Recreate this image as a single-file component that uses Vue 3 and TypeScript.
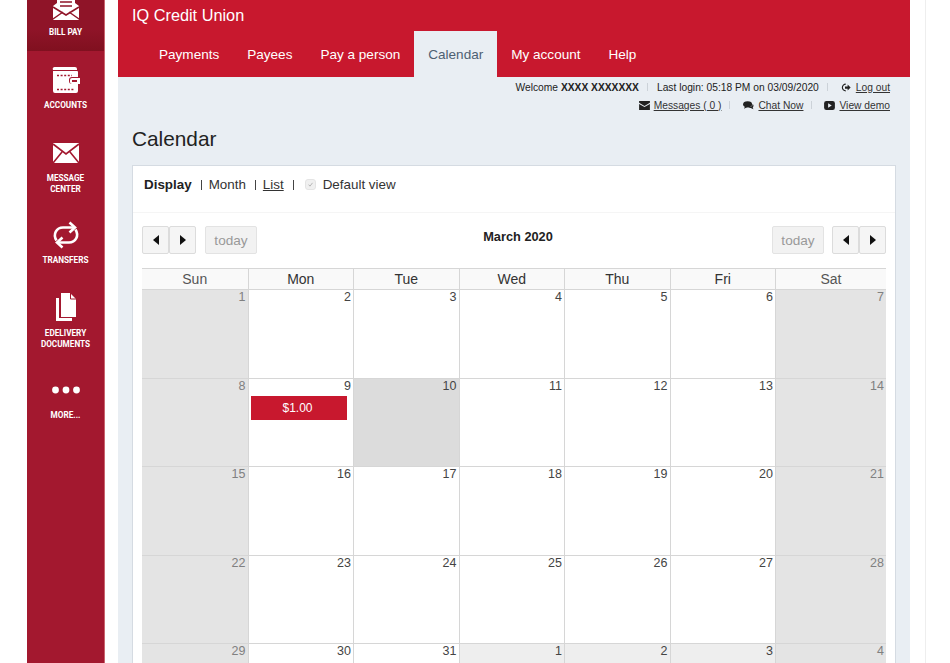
<script setup lang="ts">
interface Cell { n: number; kind: string; event?: string }
const heads = ['Sun', 'Mon', 'Tue', 'Wed', 'Thu', 'Fri', 'Sat']
const cells: Cell[] = []
for (let i = 0; i < 35; i++) {
  const d = i + 1
  const n = d > 31 ? d - 31 : d
  const col = i % 7
  let kind = 'day'
  if (col === 0 || col === 6) kind = 'weekend'
  else if (d > 31) kind = 'other'
  if (d === 10) kind = 'cur'
  cells.push({ n, kind, event: d === 9 ? '$1.00' : undefined })
}
</script>

<template>
  <div class="page">
    <aside class="side">
      <a class="item active">
        <svg class="ico" viewBox="0 0 28 26"><path d="M5 0v9L1 12v13a1 1 0 0 0 1 1h24a1 1 0 0 0 1-1V12l-4-3V0z" fill="#fff"/><path d="M8 8h12M8 12h12" stroke="#8f1428" stroke-width="1.400"/><path d="M1 13l13 8 13-8M1 25l10-7M27 25l-10-7" stroke="#8f1428" stroke-width="1.500" fill="none"/></svg>
        <span>BILL PAY</span>
      </a>
      <a class="item">
        <svg class="ico" viewBox="0 0 28 26"><path d="M3 0h20a2 2 0 0 1 2 2v1H1a2 2 0 0 1 2-3z" fill="#fff"/><path d="M1 4h24a1 1 0 0 1 1 1v5h-6a3 3 0 0 0-3 3v1a3 3 0 0 0 3 3h6v7a2 2 0 0 1-2 2H3a2 2 0 0 1-2-2z" fill="#fff"/><path d="M20 11h8v6h-8a2 2 0 0 1-2-2v-2a2 2 0 0 1 2-2z" fill="#fff"/><rect x="20" y="13" width="5" height="2" fill="#a3182f"/><path d="M5 8.500h15M5 22.500h17" stroke="#a3182f" stroke-width="1.600" stroke-dasharray="2 1.600"/></svg>
        <span>ACCOUNTS</span>
      </a>
      <a class="item">
        <svg class="ico" viewBox="0 0 28 26"><path d="M1 3h26v20H1z" fill="#fff"/><path d="M1 4l13 10L27 4M1 23l9-11M27 23l-9-11" stroke="#a3182f" stroke-width="1.600" fill="none"/></svg>
        <span>MESSAGE<br />CENTER</span>
      </a>
      <a class="item">
        <svg class="ico" viewBox="0 0 28 26"><g stroke="#fff" stroke-width="2.600" fill="none"><path d="M4.500 18.500C.5 12 4.500 5.500 11 5.500h11"/><path d="M17.500 .5l5.500 5-5.500 5"/><path d="M23.500 7.500C27.500 14 23.500 20.500 17 20.500H6"/><path d="M10.500 15.500l-5.500 5 5.500 5"/></g></svg>
        <span>TRANSFERS</span>
      </a>
      <a class="item">
        <svg class="ico" viewBox="0 0 28 26"><path d="M4 3h3v20h13v3H4z" fill="#fff"/><path d="M9 -2h9l6 6v18H9z" fill="#fff"/><path d="M18.500 -2v6h6" stroke="#a3182f" stroke-width="1" fill="none"/></svg>
        <span>EDELIVERY<br />DOCUMENTS</span>
      </a>
      <a class="item">
        <svg class="ico" viewBox="0 0 28 26"><circle cx="3.500" cy="13" r="3.400" fill="#fff"/><circle cx="14" cy="13" r="3.400" fill="#fff"/><circle cx="24.500" cy="13" r="3.400" fill="#fff"/></svg>
        <span>MORE...</span>
      </a>
    </aside>

    <main class="main">
      <header class="head">
        <div class="brand">IQ Credit Union</div>
        <nav class="tabs">
          <a class="tab">Payments</a>
          <a class="tab">Payees</a>
          <a class="tab">Pay a person</a>
          <a class="tab on">Calendar</a>
          <a class="tab">My account</a>
          <a class="tab">Help</a>
        </nav>
      </header>

      <div class="info">
        <div class="line">
          <span>Welcome <b>XXXX XXXXXXX</b></span>
          <i class="sep a"></i>
          <span>Last login: 05:18 PM on 03/09/2020</span>
          <i class="sep b"></i>
          <svg class="mini" viewBox="0 0 12 12"><path d="M5 1.500a4.500 4.500 0 1 0 0 9" stroke="#222" stroke-width="1.500" fill="none"/><path d="M4 4.500h3.500V2L11.500 6 7.500 10V7.500H4z" fill="#222"/></svg>
          <a class="lnk">Log out</a>
        </div>
        <div class="line">
          <svg class="mini" viewBox="0 0 12 10"><path d="M0 0h12v2L6 5.500 0 2z M0 3.200L6 6.800l6-3.600V10H0z" fill="#222"/></svg>
          <a class="lnk">Messages ( 0 )</a>
          <i class="sep c"></i>
          <svg class="mini" viewBox="0 0 12 10"><ellipse cx="5" cy="3.700" rx="5" ry="3.500" fill="#222"/><path d="M2 6l-1 2.500L4.500 7z" fill="#222"/><path d="M10.600 3.400c1.200.7 1.400 2.800.1 3.800l.8 2-3-1.500c-1 .1-2-.2-2.800-.7 3 .1 5.300-1.500 4.900-3.600z" fill="#222"/></svg>
          <a class="lnk">Chat Now</a>
          <i class="sep d"></i>
          <svg class="mini" viewBox="0 0 12 10"><rect x="0" y="0" width="12" height="10" rx="2.500" fill="#222"/><path d="M4.500 2.600L8.500 5l-4 2.400z" fill="#e9eef3"/></svg>
          <a class="lnk">View demo</a>
        </div>
      </div>

      <h1 class="title">Calendar</h1>

      <section class="card">
        <div class="display">
          <b>Display</b>
          <span class="bar">Month</span>
          <span class="bar"><a class="list">List</a></span>
          <span class="bar last"></span>
          <span class="check"><svg viewBox="0 0 12 12"><path d="M3.500 6.200l1.800 2 3.400-4.400" stroke="#999" stroke-width=".9" fill="none"/></svg></span>
          <span>Default view</span>
        </div>
        <div class="cal">
          <div class="toolbar">
            <div class="left">
              <div class="pair">
                <button class="nav"><svg viewBox="0 0 6 10"><path d="M6 0v10L0 5z" /></svg></button>
                <button class="nav"><svg viewBox="0 0 6 10"><path d="M0 0v10l6-5z" /></svg></button>
              </div>
              <button class="today">today</button>
            </div>
            <div class="month">March 2020</div>
            <div class="right">
              <button class="today">today</button>
              <div class="pair">
                <button class="nav"><svg viewBox="0 0 6 10"><path d="M6 0v10L0 5z" /></svg></button>
                <button class="nav"><svg viewBox="0 0 6 10"><path d="M0 0v10l6-5z" /></svg></button>
              </div>
            </div>
          </div>
          <div class="grid">
            <div v-for="h in heads" :key="h" class="th" :class="{ wk: h === 'Sun' || h === 'Sat' }">{{ h }}</div>
            <div v-for="(c, i) in cells" :key="i" class="td" :class="c.kind">
              <div class="num">{{ c.n }}</div>
              <div v-if="c.event" class="event">{{ c.event }}</div>
            </div>
          </div>
        </div>
      </section>
    </main>
    <div class="edge"></div>
  </div>
</template>

<style scoped>
.page {
  width: 950px;
  height: 663px;
  overflow: hidden;
  display: flex;
  background: #fff;
  font-family: "Liberation Sans", Arial, sans-serif;
  color: #333;
}
.side {
  width: 78px;
  margin-left: 27px;
  flex: none;
  background: #a3182f;
  border-right: 1px solid #c9646f;
  box-sizing: border-box;
  height: 663px;
}
.item {
  display: flex;
  flex-direction: column;
  align-items: center;
  box-sizing: border-box;
  min-height: 73px;
  padding: 16px 0 11px;
  color: #fff;
  font-family: Roboto, "Liberation Sans", sans-serif;
  font-weight: 700;
  font-size: 8.200px;
  line-height: 11px;
  text-align: center;
}
.item.active {
  margin-top: -22px;
  background: linear-gradient(#8f1428 70%, #80101f);
}
.ico {
  width: 28px;
  height: 26px;
  margin-bottom: 7px;
  display: block;
  overflow: visible;
}
.main {
  width: 792px;
  margin-left: 13px;
  flex: none;
  background: #e9eef3;
  height: 663px;
}
.edge {
  margin-left: 15px;
  width: 1px;
  height: 663px;
  background: #eeeeee;
}
.head {
  height: 77px;
  background: #c8182e;
  display: flex;
  flex-direction: column;
}
.brand {
  color: #fff;
  font-size: 16.300px;
  line-height: 20px;
  padding: 5px 0 0 14px;
  height: 31px;
  box-sizing: border-box;
}
.tabs {
  display: flex;
  padding-left: 27px;
  height: 46px;
}
.tab {
  padding: 1px 14px 0;
  font-size: 13.550px;
  line-height: 45px;
  color: #fff;
}
.tab.on {
  background: #e9eef3;
  color: #4d6072;
}
.info {
  height: 37px;
  padding-right: 20px;
  font-size: 10.250px;
  color: #222;
}
.line {
  display: flex;
  justify-content: flex-end;
  align-items: center;
  height: 18px;
}
.line:first-child {
  margin-top: 1px;
}
.sep {
  width: 1px;
  height: 8px;
  background: #ccd2d8;
}
.sep.a { margin: 0 9px 0 8px; }
.sep.b { margin: 0 13px 0 8px; }
.sep.c { margin: 0 13px 0 8px; }
.sep.d { margin: 0 12px 0 8px; }
.mini {
  width: 11px;
  height: 9px;
  margin-right: 4px;
}
.lnk {
  text-decoration: underline;
  color: #333;
}
.title {
  margin: 0;
  padding: 11px 0 0 14px;
  font-weight: 400;
  font-size: 20.800px;
  line-height: 25px;
  height: 50px;
  box-sizing: border-box;
  color: #222;
}
.card {
  margin: 0 14px;
  background: #fff;
  border: 1px solid #d5dbe2;
  border-bottom: 0;
  box-sizing: border-box;
  height: 600px;
}
.display {
  height: 47px;
  border-bottom: 1px solid #f5f5f5;
  box-sizing: border-box;
  display: flex;
  align-items: center;
  padding: 0 0 10px 11px;
  font-size: 13.400px;
  color: #333;
}
.display b { color: #222; }
.bar::before {
  content: "";
  display: inline-block;
  width: 1px;
  height: 10px;
  background: #444;
  margin-right: 7px;
  vertical-align: -1px;
}
.bar { margin-left: 9px; }
.list { text-decoration: underline; }
.bar.last { margin-right: 4px; }
.check {
  width: 11px;
  height: 11px;
  border-radius: 3px;
  background: #f0f0f0;
  border: 1px solid #e4e4e4;
  box-sizing: border-box;
  margin-right: 7px;
  display: flex;
}
.check svg { width: 100%; height: 100%; }
.cal {
  padding: 13px 9px 0;
}
.toolbar {
  position: relative;
  display: flex;
  justify-content: space-between;
  height: 42px;
}
.left, .right {
  display: flex;
  align-items: flex-start;
  gap: 9px;
}
.right { gap: 8px; }
.pair { display: flex; }
.nav {
  width: 27px;
  height: 28px;
  padding: 0;
  background: #f5f5f5;
  border: 1px solid #dcdcdc;
  border-radius: 2px;
  display: flex;
  align-items: center;
  justify-content: center;
}
.nav svg { width: 6px; height: 10px; fill: #111; }
.today {
  width: 52px;
  height: 28px;
  padding: 0;
  background: #f2f2f2;
  border: 1px solid #e3e3e3;
  border-radius: 2px;
  font-family: inherit;
  font-size: 13.600px;
  color: #999;
}
.month {
  position: absolute;
  left: 8px;
  right: 0;
  top: 3px;
  text-align: center;
  font-size: 12.800px;
  font-weight: 700;
  line-height: 16px;
  color: #222;
  pointer-events: none;
}
.grid {
  display: grid;
  grid-template-columns: repeat(6, 105.500px) 111px;
  grid-template-rows: 21px repeat(5, 88.500px);
  border-top: 1px solid #d6d6d6;
}
.th {
  background: #f9f9f9;
  border-left: 1px solid #d6d6d6;
  border-bottom: 1px solid #d6d6d6;
  box-sizing: border-box;
  text-align: center;
  font-size: 14px;
  line-height: 20px;
  color: #333;
}
.th:first-child { border-left: 0; }
.th.wk { color: #555; }
.td {
  border-left: 1px solid #d6d6d6;
  border-bottom: 1px solid #d6d6d6;
  box-sizing: border-box;
  padding: 0 2px;
  background: #fff;
  color: #444;
}
.td:nth-child(7n + 1) { border-left: 0; }
.td.weekend { background: #e4e4e4; color: #808080; }
.td.other { background: #eeeeee; }
.td.cur { background: #dcdcdc; }
.num {
  text-align: right;
  font-size: 12.500px;
  line-height: 15px;
}
.event {
  margin: 2px 0 0 0;
  width: 96px;
  height: 24px;
  background: #c8182e;
  color: #fff;
  font-size: 12px;
  line-height: 24px;
  text-align: center;
  padding-right: 2px;
  box-sizing: border-box;
}
</style>

<style>
html, body { margin: 0; overflow: hidden; }
</style>
